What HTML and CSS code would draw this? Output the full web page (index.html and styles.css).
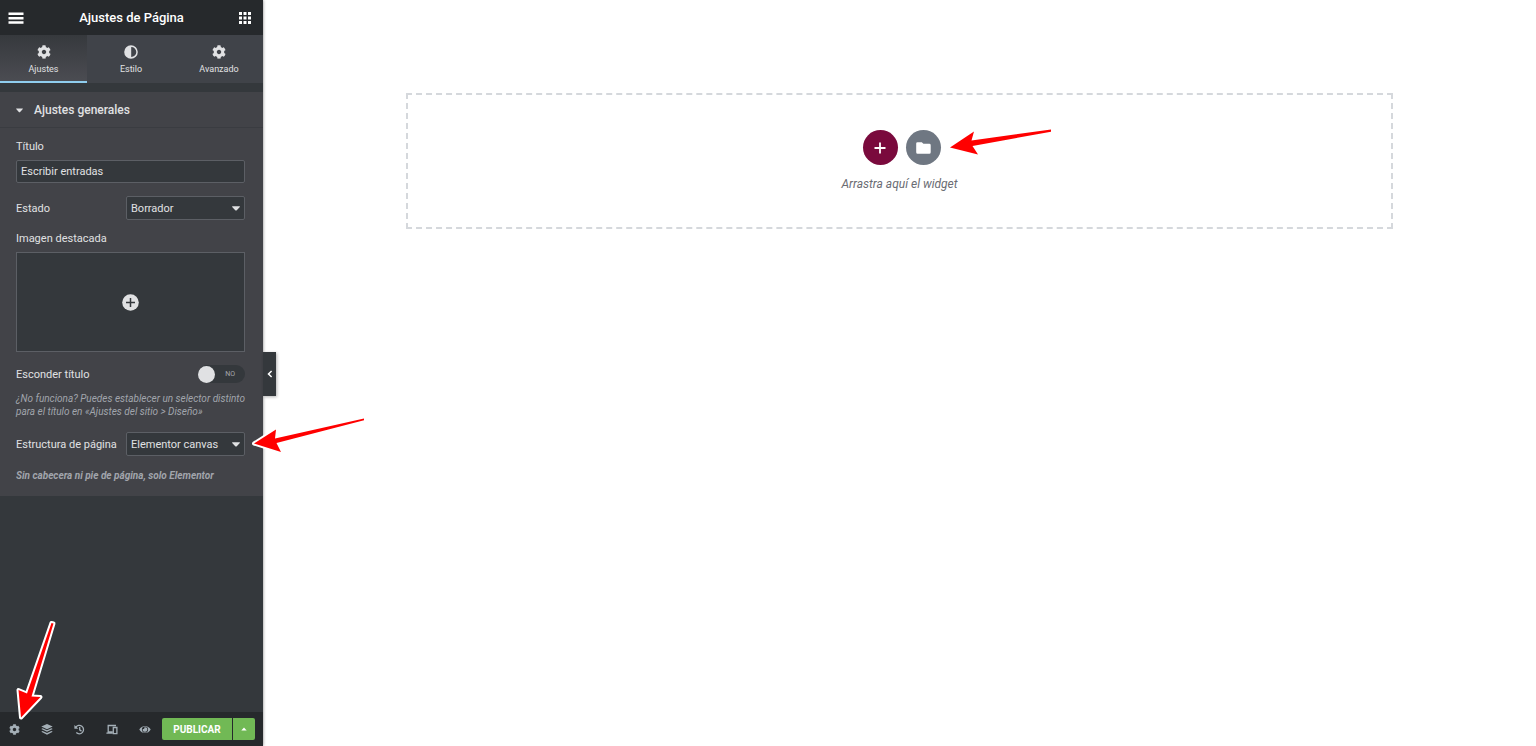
FILE: index.html
```html
<!DOCTYPE html>
<html lang="es">
<head>
<meta charset="utf-8">
<meta name="viewport" content="width=device-width, initial-scale=1">
<title>Ajustes de Página</title>
<link rel="stylesheet" href="styles.css">
</head>
<body>
<svg class="defs" aria-hidden="true">
  <symbol id="gear" viewBox="0 0 512 512"><path d="M487.4 315.7l-42.6-24.6c4.3-23.2 4.3-47 0-70.2l42.6-24.6c4.9-2.8 7.1-8.6 5.5-14-11.1-35.6-30-67.8-54.7-94.6-3.8-4.1-10-5.1-14.8-2.3L380.8 110c-17.9-15.4-38.5-27.3-60.8-35.1V25.8c0-5.6-3.9-10.5-9.4-11.7-36.7-8.2-74.3-7.8-109.2 0-5.5 1.2-9.4 6.1-9.4 11.7V75c-22.2 7.9-42.8 19.8-60.8 35.1L88.7 85.5c-4.9-2.8-11-1.9-14.8 2.3-24.7 26.7-43.6 58.9-54.7 94.6-1.7 5.4.6 11.2 5.5 14L67.3 221c-4.3 23.2-4.3 47 0 70.2l-42.6 24.6c-4.9 2.8-7.1 8.6-5.5 14 11.1 35.6 30 67.8 54.7 94.6 3.8 4.1 10 5.1 14.8 2.3l42.6-24.6c17.9 15.4 38.5 27.3 60.8 35.1v49.2c0 5.6 3.9 10.5 9.4 11.7 36.7 8.2 74.3 7.8 109.2 0 5.5-1.2 9.4-6.1 9.4-11.7v-49.2c22.2-7.9 42.8-19.8 60.8-35.1l42.6 24.6c4.9 2.8 11 1.9 14.8-2.3 24.7-26.7 43.6-58.9 54.7-94.6 1.5-5.500-.7-11.300-5.600-14.100zM256 336c-44.100 0-80-35.900-80-80s35.900-80 80-80 80 35.900 80 80-35.900 80-80 80z"/></symbol>
  <symbol id="caret" viewBox="0 0 8 5"><path d="M.4.200h7.200q.5.200.2.700L4.500 4.400q-.5.400-1 0L.2.900Q-.1.400.4.200z"/></symbol>
</svg>
<div class="editor">
  <aside class="panel">
    <header class="panel-header">
      <button class="icon-button" type="button" aria-label="Menú">
        <svg width="16" height="12" viewBox="0 0 16 12"><path d="M.5.500h15v2.500H.5zM.5 5h15v2.500H.5zM.5 9.300h15v2.500H.5z"/></svg>
      </button>
      <h1 class="panel-title">Ajustes de Página</h1>
      <button class="icon-button" type="button" aria-label="Widgets">
        <svg width="12" height="12" viewBox="0 0 12 12"><path d="M0 0h3v3H0zM4.500 0h3v3h-3zM9 0h3v3H9zM0 4.500h3v3H0zM4.500 4.500h3v3h-3zM9 4.500h3v3H9zM0 9h3v3H0zM4.500 9h3v3h-3zM9 9h3v3H9z"/></svg>
      </button>
    </header>

    <nav class="tabs">
      <button class="tab tab-active" type="button"><svg width="14" height="14"><use href="#gear"/></svg>Ajustes</button>
      <button class="tab" type="button"><svg width="14" height="14" viewBox="0 0 14 14"><path fill-rule="evenodd" d="M7 .2a6.800 6.800 0 1 1 0 13.600A6.800 6.800 0 0 1 7 .2zM7.200 1.900v10.200a5.100 5.100 0 0 0 0-10.200z"/></svg>Estilo</button>
      <button class="tab" type="button"><svg width="14" height="14"><use href="#gear"/></svg>Avanzado</button>
    </nav>

    <main class="panel-content">
      <section class="section">
        <h2 class="section-heading"><button class="section-toggle" type="button" aria-expanded="true"><svg width="7" height="5"><use href="#caret"/></svg>Ajustes generales</button></h2>
        <form class="controls">
          <div class="field">
            <label for="titulo">Título</label>
            <input class="text-input" id="titulo" type="text" value="Escribir entradas">
          </div>
          <div class="row">
            <label for="estado">Estado</label>
            <span class="select-wrap">
              <select class="select" id="estado"><option>Borrador</option></select>
              <svg class="select-caret" width="8" height="5"><use href="#caret"/></svg>
            </span>
          </div>
          <div class="field">
            <span>Imagen destacada</span>
            <button class="media" type="button" aria-label="Elegir imagen">
              <svg width="17" height="17" viewBox="0 0 17 17"><circle cx="8.500" cy="8.500" r="8.300"/><path class="media-plus" d="M8.500 4v9M4 8.500h9"/></svg>
            </button>
          </div>
          <div class="row row-switch">
            <label for="esconder">Esconder título</label>
            <span class="switch">
              <input class="switch-input" id="esconder" type="checkbox">
              <span class="switch-knob"></span>
              <span class="switch-label">NO</span>
            </span>
          </div>
          <p class="description">¿No funciona? Puedes establecer un selector distinto para el título en «Ajustes del sitio &gt; Diseño»</p>
          <div class="row row-layout">
            <label for="estructura">Estructura de página</label>
            <span class="select-wrap">
              <select class="select" id="estructura"><option>Elementor canvas</option></select>
              <svg class="select-caret" width="8" height="5"><use href="#caret"/></svg>
            </span>
          </div>
          <p class="description description-strong">Sin cabecera ni pie de página, solo Elementor</p>
        </form>
      </section>
    </main>

    <footer class="panel-footer">
      <div class="tools">
        <button class="tool" type="button" aria-label="Ajustes"><svg width="11" height="11"><use href="#gear"/></svg></button>
        <button class="tool" type="button" aria-label="Navegador"><svg width="12" height="11" viewBox="0 0 12 11"><path d="M6 0l5.700 2.600L6 5.200.3 2.600zM1.600 4.300L6 6.300l4.400-2 1.300.7L6 7.800.3 5zM1.600 7L6 9l4.400-2 1.300.8L6 10.700.3 7.800z"/></svg></button>
        <button class="tool" type="button" aria-label="Historial"><svg width="11" height="11" viewBox="0 0 11 11"><path class="line" d="M1.800 3.300A4.200 4.200 0 1 1 2.300 8.500M5.700 3v2.900l1.800 1.200"/><path d="M.4.900v3.900h3.900z"/></svg></button>
        <button class="tool" type="button" aria-label="Modo adaptable"><svg width="12" height="11" viewBox="0 0 12 11"><path class="line" d="M6.500 7.800H2.200V1.500H10M.4 9.200h6.100M7.300 3.500h3.600v6.200H7.300z"/></svg></button>
        <button class="tool" type="button" aria-label="Vista previa"><svg width="12" height="9" viewBox="0 0 12 9"><path fill-rule="evenodd" d="M.3 4.500C2.700-.2 9.300-.2 11.700 4.500 9.300 9.200 2.700 9.200.3 4.500zM6 1.400a3.100 3.100 0 1 0 0 6.200 3.100 3.100 0 0 0 0-6.200z"/><path d="M6 2.200a2.300 2.300 0 1 1-2.200 1.700c.8.500 1.900-.4 1.500-1.500z"/></svg></button>
      </div>
      <div class="publish-group">
        <button class="publish" type="button">PUBLICAR</button>
        <button class="publish-more" type="button" aria-label="Más opciones"><svg width="6" height="4" viewBox="0 0 6 4"><path d="M.3 3.500L3 .5l2.700 3z"/></svg></button>
      </div>
    </footer>
    <button class="collapse" type="button" aria-label="Contraer panel"><svg width="6" height="8" viewBox="0 0 6 8"><path d="M4.600 1L1.500 4l3.100 3"/></svg></button>
  </aside>

  <div class="preview">
    <div class="dropzone">
      <div class="dropzone-actions">
        <button class="round round-add" type="button" aria-label="Añadir"><svg width="12" height="12" viewBox="0 0 12 12"><path d="M5.100.5h1.800v4.600h4.600v1.800H6.900v4.600H5.100V6.900H.5V5.100h4.600z"/></svg></button>
        <button class="round round-folder" type="button" aria-label="Plantillas"><svg width="15" height="12" viewBox="0 0 15 12"><path d="M1.500.2h4.300L7.400 1.800h5.900q1.400 0 1.400 1.400v7q0 1.500-1.400 1.500H1.600Q.2 11.700.2 10.200V1.600Q.2.2 1.500.2z"/></svg></button>
      </div>
      <p class="dropzone-text">Arrastra aquí el widget</p>
    </div>
  </div>

  <svg class="arrow arrow-settings" width="60" height="114" viewBox="0 0 60 114"><path class="halo" d="M51.500 13L27 83.500l-8.500-3.500L21 107.500 40.500 87l-9-.5L53.500 13.500z"/></svg>
  <svg class="arrow arrow-layout" width="120" height="44" viewBox="0 0 120 44"><path class="halo" d="M4 30.500L26 16.500l-1 9L114 5.500v1.800L26.500 30l4.500 9z"/></svg>
  <svg class="arrow arrow-folder" width="110" height="36" viewBox="0 0 110 36"><path d="M4 23.500L28 7.500l-2.500 9L105 5.500v2.200L26.500 22l5.500 8.500z"/></svg>
</div>
</body>
</html>
```
FILE: styles.css
```css
* { box-sizing: border-box; }
body {
  margin: 0;
  background: #fff;
  color: #e0e1e3;
  font: 400 11px/13px Roboto, "Liberation Sans", sans-serif;
}
button, input, select { margin: 0; font: inherit; color: inherit; }
button { padding: 0; border: 0; background: none; }
svg { display: block; fill: currentColor; }
h1, h2, p { margin: 0; }
.defs { position: absolute; width: 0; height: 0; }

.editor { position: relative; display: flex; min-height: 100vh; }
.panel {
  position: relative;
  display: flex;
  flex: none;
  flex-direction: column;
  width: 263px;
  background: #34383c;
  box-shadow: 0 0 3px rgba(0, 0, 0, .5);
}

.panel-header {
  display: flex;
  align-items: center;
  justify-content: space-between;
  height: 35px;
  padding: 0 12px 0 8px;
  background: #26292c;
}
.icon-button { color: #fff; }
.panel-title { color: #fff; font-size: 13px; line-height: 18px; font-weight: 500; }

.tabs { display: grid; grid-template-columns: 87px 1fr 1fr; height: 48px; background: #404349; }
.tab {
  display: flex;
  flex-direction: column;
  align-items: center;
  gap: 4px;
  padding-top: 10px;
  border-bottom: 2px solid transparent;
  font-size: 9px;
  line-height: 12px;
}
.tab-active {
  border-bottom-color: #8fcdee;
  background: linear-gradient(#36393d, #4b4c52);
}

.panel-content { flex: 1; padding-top: 9px; }
.section { background: #424348; }
.section-heading { font-size: 12px; border-bottom: 1px solid #3a3c41; }
.section-toggle {
  display: flex;
  align-items: center;
  gap: 11px;
  width: 100%;
  height: 35px;
  padding: 1px 16px 0;
  font-weight: 500;
}
.controls { display: flex; flex-direction: column; padding: 12px 18px 14px 16px; }
.field { display: flex; flex-direction: column; gap: 7px; }
.text-input {
  width: 100%;
  height: 23px;
  padding: 0 4px;
  border: 1px solid #5c5f65;
  border-radius: 2px;
  background: #34383c;
}
.row { display: flex; align-items: center; justify-content: space-between; padding: 13px 0 12px; }
.select-wrap { position: relative; width: 119px; }
.select {
  display: block;
  width: 100%;
  height: 24px;
  padding: 0 16px 0 4px;
  border: 1px solid #5c5f65;
  border-radius: 2px;
  background: #34383c;
  appearance: none;
}
.select-caret { position: absolute; top: 10px; right: 5px; pointer-events: none; }
.media {
  display: flex;
  align-items: center;
  justify-content: center;
  height: 100px;
  border: 1px solid #5c5f65;
  background: #34383c;
}
.media-plus { stroke: #34383c; stroke-width: 1.5; }
.row-switch { padding: 13px 0 9px; }
.switch {
  position: relative;
  display: flex;
  align-items: center;
  justify-content: space-between;
  width: 47px;
  height: 18px;
  padding-right: 10px;
  border-radius: 9px;
  background: #34383c;
}
.switch-input { position: absolute; inset: 0; width: 100%; height: 100%; margin: 0; opacity: 0; }
.switch-knob { width: 17px; height: 17px; border-radius: 50%; background: #e0e1e3; }
.switch-label { color: #a4a7ac; font-size: 7px; }
.description { color: #a1a5ac; font-size: 10px; font-style: italic; }
.row-layout { padding: 14px 0 13px; }
.description-strong { font-weight: 700; }

.panel-footer {
  display: flex;
  align-items: center;
  justify-content: space-between;
  height: 34px;
  padding-right: 8px;
  background: #26292c;
}
.tools { display: flex; flex: 1; justify-content: space-between; padding: 0 11px 0 9px; color: #a4afb7; }
.tool { display: flex; align-items: center; justify-content: center; height: 34px; }
.line { fill: none; stroke: currentColor; stroke-width: 1.3; }
.publish-group { display: flex; gap: 1px; height: 22px; }
.publish { width: 70px; border-radius: 2px 0 0 2px; background: #71b955; color: #fff; font-size: 10px; font-weight: 700; }
.publish-more {
  display: flex;
  align-items: center;
  justify-content: center;
  width: 22px;
  border-radius: 0 2px 2px 0;
  background: #71b955;
  color: #fff;
}
.collapse {
  position: absolute;
  top: 352px;
  left: 100%;
  display: flex;
  align-items: center;
  justify-content: center;
  width: 13px;
  height: 44px;
  background: #34383c;
  box-shadow: 1px 1px 3px rgba(0, 0, 0, .3);
}
.collapse path { fill: none; stroke: #fff; stroke-width: 1.5; }

.preview { flex: 1; padding: 93px 143px; }
.dropzone {
  display: flex;
  flex-direction: column;
  align-items: center;
  gap: 13px;
  padding: 35px 0 36px;
  border: 2px dashed #d5d8dc;
}
.dropzone-actions { display: flex; gap: 8px; padding-left: 4px; }
.round {
  display: flex;
  align-items: center;
  justify-content: center;
  width: 35px;
  height: 35px;
  border-radius: 50%;
  color: #fff;
}
.round-add { background: #7a0a3d; }
.round-folder { background: #6f7782; }
.dropzone-text { color: #6a6c73; font-size: 12px; font-style: italic; }

.arrow { position: absolute; fill: #f00; pointer-events: none; }
.halo { stroke: #fff; stroke-width: 4; stroke-linejoin: round; paint-order: stroke; }
.arrow-settings { top: 610px; left: 0; }
.arrow-layout { top: 413px; left: 250px; }
.arrow-folder { top: 124px; left: 946px; }
```
